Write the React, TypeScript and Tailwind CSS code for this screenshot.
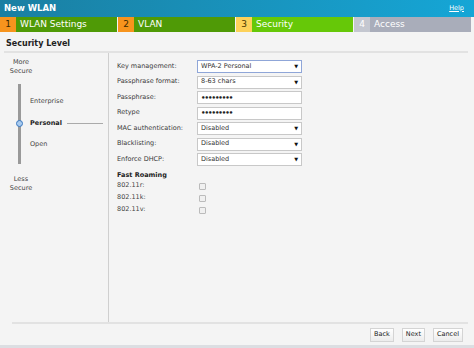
const font = { fontFamily: '"DejaVu Sans", Verdana, sans-serif' };

const tabs = [
  { n: "1", label: "WLAN Settings", num: "bg-[#f7941d] text-[#3a2a00]", body: "bg-[#4f9a06] text-white" },
  { n: "2", label: "VLAN", num: "bg-[#f7941d] text-[#3a2a00]", body: "bg-[#4f9a06] text-white" },
  { n: "3", label: "Security", num: "bg-[#fdd25a] text-[#4a3a00]", body: "bg-[#66c808] text-white" },
  { n: "4", label: "Access", num: "bg-[#c4c7d0] text-white", body: "bg-[#a9adba] text-white" },
];

const fields = [
  { label: "Key management:", value: "WPA-2 Personal", kind: "select", focus: true },
  { label: "Passphrase format:", value: "8-63 chars", kind: "select" },
  { label: "Passphrase:", value: "•••••••••", kind: "text" },
  { label: "Retype", value: "•••••••••", kind: "text" },
  { label: "MAC authentication:", value: "Disabled", kind: "select" },
  { label: "Blacklisting:", value: "Disabled", kind: "select" },
  { label: "Enforce DHCP:", value: "Disabled", kind: "select" },
];

function Field({ label, value, kind, focus }: { label: string; value: string; kind: string; focus?: boolean }) {
  return (
    <div className="flex h-[15.5px] items-center">
      <span className="w-[80px] text-[6.5px] text-[#3a3a3a]">{label}</span>
      <div
        className={`flex h-[13px] w-[105px] items-center justify-between border bg-white px-[3px] ${
          focus ? "border-[#8fa6d8]" : "border-[#c8c8c8]"
        }`}
      >
        <span className={kind === "text" ? "text-[7px] font-bold tracking-[-1px] text-[#222]" : "text-[6.5px] text-[#333]"}>
          {value}
        </span>
        {kind === "select" && <span className="text-[5px] leading-none text-[#111]">▼</span>}
      </div>
    </div>
  );
}

export default function App() {
  return (
    <div className="flex h-[348px] w-[474px] flex-col overflow-hidden bg-[#f4f4f4]" style={font}>
      <div className="flex h-[17px] items-center justify-between bg-gradient-to-r from-[#1a7fa2] to-[#15a6d6] px-[4px]">
        <span className="text-[8.5px] font-bold text-white">New WLAN</span>
        <span className="mr-[6px] text-[6.5px] text-white underline">Help</span>
      </div>
      <div className="flex h-[15px] gap-px">
        {tabs.map((t) => (
          <div key={t.n} className="flex w-[117px]">
            <div className={`flex w-[16px] items-center justify-center text-[9px] ${t.num}`}>{t.n}</div>
            <div className={`flex flex-1 items-center pl-[4px] text-[9px] ${t.body}`}>{t.label}</div>
          </div>
        ))}
      </div>
      <div className="px-[6px] pt-[6px] text-[8px] font-bold text-[#222]">Security Level</div>
      <div className="mx-[4px] mt-[1px] h-[2px] w-[464px] bg-[#e2e2e2]" />
      <div className="flex h-[269px]">
        <div className="w-[109px] border-r border-[#cfcfcf] pt-[5px]">
          <div className="w-[42px] text-center text-[6.5px] leading-[9px] text-[#444]">
            More
            <br />
            Secure
          </div>
          <div className="ml-[18px] mt-[8px] flex">
            <div className="h-[80px] w-[3px] bg-[#999]" />
            <div className="flex flex-col pt-[13px]">
              <span className="ml-[9px] text-[6.5px] text-[#444]">Enterprise</span>
              <div className="relative mt-[12px] flex items-center">
                <span className="absolute left-[-5px] h-[7px] w-[7px] rounded-full border border-[#3a78c0] bg-[#a9cbef]" />
                <span className="ml-[9px] text-[6.5px] font-bold text-[#222]">Personal</span>
                <span className="ml-[5px] h-px w-[36px] bg-[#aaa]" />
              </div>
              <span className="ml-[9px] mt-[11px] text-[6.5px] text-[#444]">Open</span>
            </div>
          </div>
          <div className="mt-[11px] w-[42px] text-center text-[6.5px] leading-[9px] text-[#444]">
            Less
            <br />
            Secure
          </div>
        </div>
        <div className="flex flex-col pl-[8px] pt-[6px]">
          {fields.map((f) => (
            <Field key={f.label} {...f} />
          ))}
          <div className="mt-[3px] text-[6.5px] font-bold text-[#222]">Fast Roaming</div>
          {["802.11r:", "802.11k:", "802.11v:"].map((l) => (
            <div key={l} className="flex h-[12px] items-center">
              <span className="w-[82px] text-[6.5px] text-[#444]">{l}</span>
              <span className="h-[7px] w-[7px] rounded-[1px] border border-[#bbb] bg-[#f0f0f0]" />
            </div>
          ))}
        </div>
      </div>
      <div className="ml-[12px] h-[2px] w-[456px] bg-[#e2e2e2]" />
      <div className="flex justify-end gap-[8px] pr-[11px] pt-[4px]">
        {["Back", "Next", "Cancel"].map((b) => (
          <div
            key={b}
            className="flex h-[14px] items-center border border-[#d4d4d4] bg-gradient-to-b from-white to-[#ececec] px-[3px] text-[6.5px] text-[#222]"
          >
            {b}
          </div>
        ))}
      </div>
      <div className="mt-auto h-[3px] bg-[#dcdee2]" />
    </div>
  );
}
